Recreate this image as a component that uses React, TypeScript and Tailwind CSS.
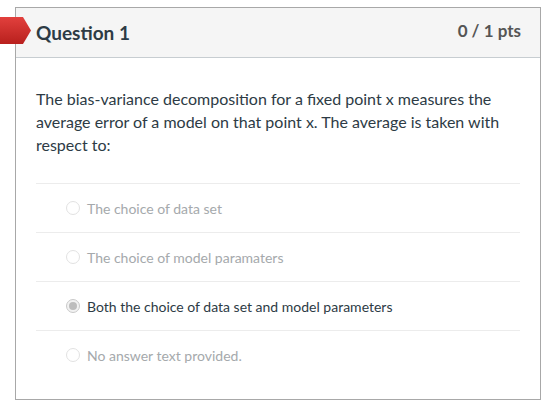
import React from 'react';

const answers = [
    { text: 'The choice of data set', selected: false },
    { text: 'The choice of model paramaters', selected: false },
    { text: 'Both the choice of data set and model parameters', selected: true },
    { text: 'No answer text provided.', selected: false },
];

export default function App() {
    return (
        <div className="w-[551px] h-[417px] bg-white pt-[7px] pl-[15px] font-['Lato','Liberation_Sans',sans-serif] relative">
            <div className="w-[526px] h-[393px] border border-[#a8a8a8] flex flex-col">
                <div className="h-[50px] bg-[#f5f5f5] border-b border-[#c7cdd1] flex items-center justify-between pl-[20px] pr-[19px]">
                    <h2 className="text-[19px] font-bold text-[#2d3b45] mt-[2px]">Question 1</h2>
                    <span className="text-[17px] font-bold text-[#555] -mt-[4px]">0 / 1 pts</span>
                </div>
                <div className="px-[20px] pt-[29px]">
                    <p className="text-[16px] leading-[23px] text-[#2d3b45]">
                        The bias-variance decomposition for a fixed point x measures the average error of a model on that point x. The average is taken with respect to:
                    </p>
                    <div className="mt-[27px]">
                        {answers.map((a) => (
                            <div
                                key={a.text}
                                className="h-[49px] border-t border-[#ececec] flex items-center pl-[30px]"
                            >
                                <span
                                    className={`w-[14px] h-[14px] rounded-full border flex items-center justify-center ${
                                        a.selected ? 'border-[#c9c9c9] bg-[#f2f2f2]' : 'border-[#e2e2e2] bg-white'
                                    }`}
                                >
                                    {a.selected && <span className="w-[8px] h-[8px] rounded-full bg-[#bdbdbd]" />}
                                </span>
                                <span
                                    className={`ml-[7px] text-[14px] ${a.selected ? 'text-[#2d3b45]' : 'text-[#a5a9ac]'}`}
                                >
                                    {a.text}
                                </span>
                            </div>
                        ))}
                    </div>
                </div>
            </div>
            <svg className="absolute left-0 top-[17px]" width="31" height="27" viewBox="0 0 31 27">
                <defs>
                    <linearGradient id="flag" x1="0" y1="0" x2="0" y2="1">
                        <stop offset="0" stopColor="#e2403d" />
                        <stop offset="1" stopColor="#b8201d" />
                    </linearGradient>
                </defs>
                <polygon points="0,0 23,0 31,13.5 23,27 0,27" fill="url(#flag)" />
            </svg>
        </div>
    );
}
